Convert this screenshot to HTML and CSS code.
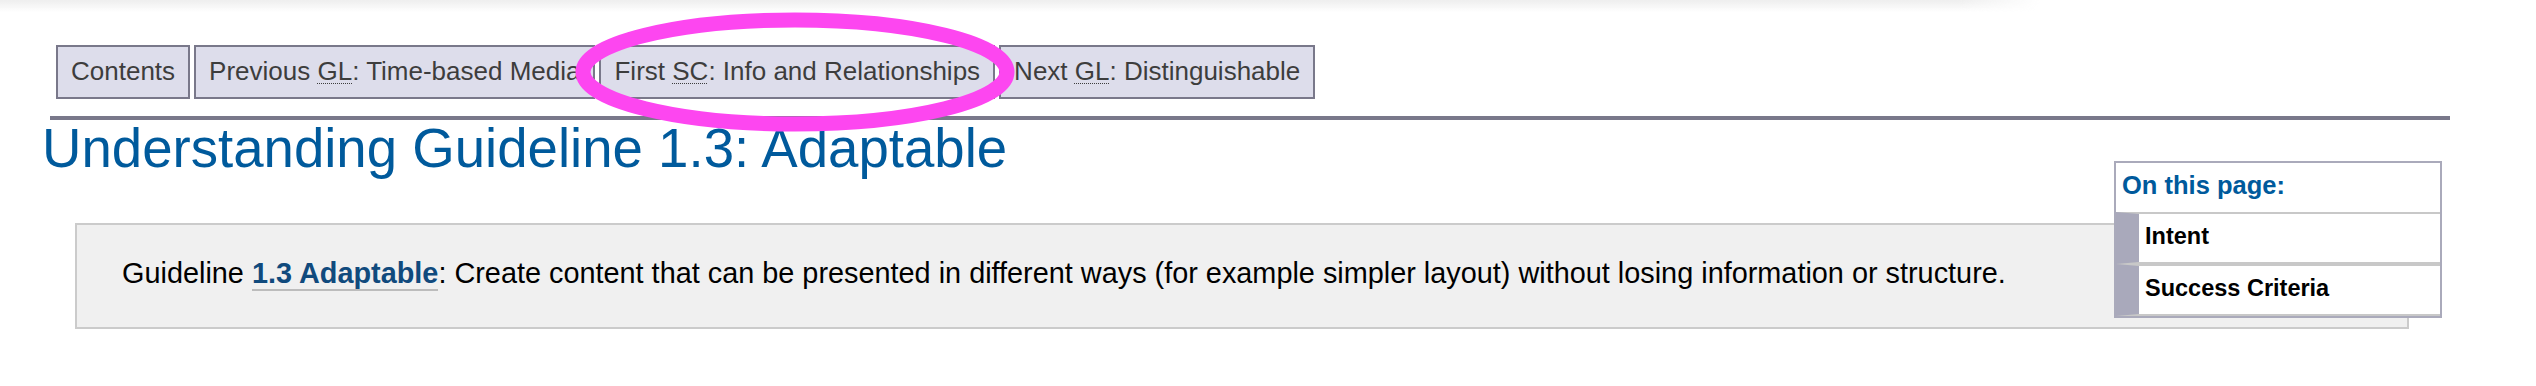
FILE: index.html
```html
<!DOCTYPE html>
<html lang="en">
<head>
<meta charset="utf-8">
<title>Understanding Guideline 1.3: Adaptable</title>
<link rel="stylesheet" href="styles.css">
</head>
<body>
<div class="page">
  <div class="topshadow"></div>
  <nav class="navbar">
    <a class="navbtn" href="#">Contents</a>
    <a class="navbtn" href="#">Previous <abbr title="Guideline">GL</abbr>: Time-based Media</a>
    <a class="navbtn" href="#">First <abbr title="Success Criterion">SC</abbr>: Info and Relationships</a>
    <a class="navbtn" href="#">Next <abbr title="Guideline">GL</abbr>: Distinguishable</a>
  </nav>
  <div class="rule"></div>
  <h1 class="title">Understanding Guideline 1.3: Adaptable</h1>
  <aside class="toc">
    <div class="toc-head">On this page:</div>
    <ul class="toc-list">
      <li class="toc-item"><a href="#intent">Intent</a></li>
      <li class="toc-item"><a href="#success-criteria">Success Criteria</a></li>
    </ul>
  </aside>
  <div class="guideline">
    <p class="guideline-text">Guideline <a class="gl-link" href="#">1.3 Adaptable</a>: Create content that can be presented in different ways (for example simpler layout) without losing information or structure.</p>
  </div>
  <svg class="annotation" width="460" height="140" viewBox="0 0 460 140" aria-hidden="true">
    <ellipse cx="230" cy="69" rx="212" ry="52" fill="none" stroke="#fd46f0" stroke-width="15"/>
  </svg>
</div>
</body>
</html>
```
FILE: styles.css
```css
html, body {
  margin: 0;
  padding: 0;
  background: #ffffff;
}

.page {
  position: relative;
  width: 2536px;
  min-height: 386px;
  font-family: "Liberation Sans", Arial, Helvetica, sans-serif;
  color: #000;
}

.topshadow {
  width: 2040px;
  height: 12px;
  background: linear-gradient(to bottom, #eeeeee, rgba(255, 255, 255, 0));
  -webkit-mask-image: linear-gradient(to right, #000 96%, transparent);
  mask-image: linear-gradient(to right, #000 96%, transparent);
}

.navbar {
  display: flex;
  gap: 4px;
  margin: 33px 0 0 56px;
}

.navbtn {
  flex: none;
  display: block;
  background: #ddddeb;
  border: 2px solid #79788a;
  padding: 9px 13px 11px;
  font-size: 26px;
  line-height: 30px;
  color: #3d3d3d;
  text-decoration: none;
  white-space: nowrap;
}

.navbtn abbr {
  text-decoration: underline dotted;
  text-decoration-thickness: 1px;
  text-underline-offset: 3px;
}

.rule {
  margin: 17px 0 0 50px;
  width: 2400px;
  height: 4px;
  background: #79788a;
}

.title {
  margin: 0 0 0 42px;
  font-size: 54.6px;
  line-height: 58px;
  font-weight: normal;
  color: #005a9c;
}

.guideline {
  box-sizing: border-box;
  width: 2334px;
  margin: 45px 0 0 75px;
  background: #f0f0f0;
  border: 2px solid #cbcbcb;
  padding: 28px 45px 34px;
}

.guideline-text {
  margin: 0;
  font-size: 28.85px;
  line-height: 40px;
  color: #000;
}

.gl-link {
  color: #104a7d;
  font-weight: bold;
  text-decoration: none;
  border-bottom: 2px solid #bcbcbc;
}

.toc {
  position: absolute;
  top: 161px;
  right: 94px;
  box-sizing: border-box;
  width: 328px;
  background: #ffffff;
  border: 2px solid #aaaabb;
}

.toc-head {
  padding: 7px 6px 12px;
  font-size: 25.5px;
  line-height: 30px;
  font-weight: bold;
  color: #005a9c;
}

.toc-list {
  list-style: none;
  margin: 0;
  padding: 0;
}

.toc-item {
  border-left: 23px solid #a9a9bb;
  border-top: 2px solid #c8c8c8;
  border-bottom: 2px solid #c8c8c8;
  padding: 8px 6px 12px;
  font-size: 23.5px;
  line-height: 28px;
  font-weight: bold;
}

.toc-item a {
  color: #000;
  text-decoration: none;
}

.annotation {
  position: absolute;
  left: 565px;
  top: 3px;
}
```
